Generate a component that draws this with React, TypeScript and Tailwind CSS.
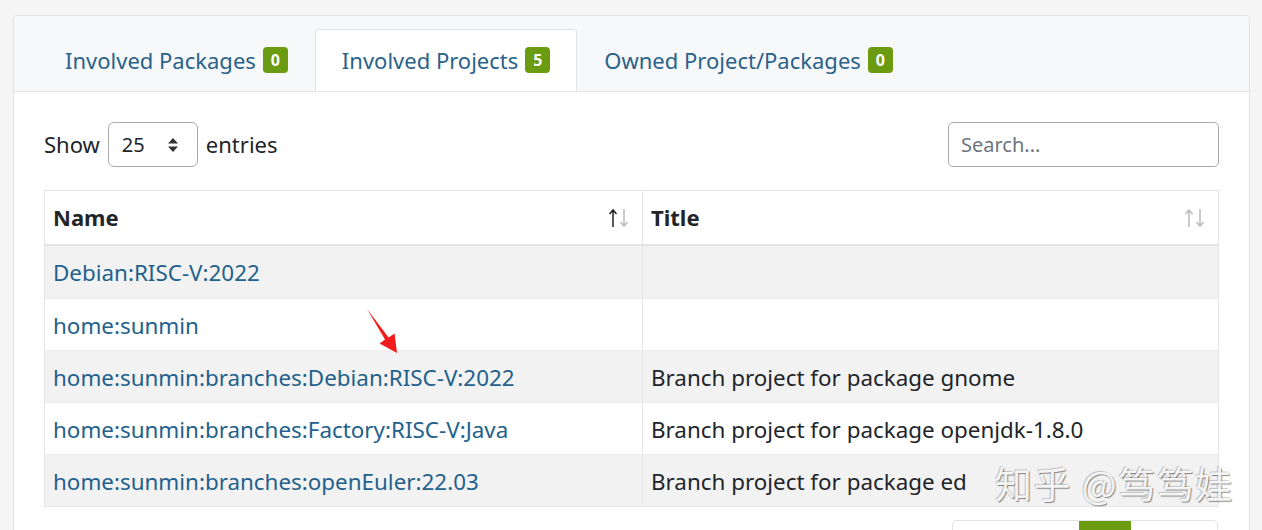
const tabs = [
  { label: "Involved Packages", count: 0, active: false },
  { label: "Involved Projects", count: 5, active: true },
  { label: "Owned Project/Packages", count: 0, active: false },
];

const rows = [
  { name: "Debian:RISC-V:2022", title: "" },
  { name: "home:sunmin", title: "" },
  { name: "home:sunmin:branches:Debian:RISC-V:2022", title: "Branch project for package gnome" },
  { name: "home:sunmin:branches:Factory:RISC-V:Java", title: "Branch project for package openjdk-1.8.0" },
  { name: "home:sunmin:branches:openEuler:22.03", title: "Branch project for package ed" },
];

function SortArrows({ active }: { active?: boolean }) {
  return (
    <span className="flex items-center gap-[1px]">
      <svg width="10" height="20" viewBox="0 0 10 20" className={active ? "text-[#222]" : "text-[#bbb]"}>
        <path d="M5 19V2M1.5 6L5 2l3.5 4" fill="none" stroke="currentColor" strokeWidth="1.5" />
      </svg>
      <svg width="10" height="20" viewBox="0 0 10 20" className="text-[#bbb]">
        <path d="M5 1v17M1.5 14L5 18l3.5-4" fill="none" stroke="currentColor" strokeWidth="1.5" />
      </svg>
    </span>
  );
}

export default function App() {
  return (
    <div className="relative min-h-screen bg-[#f5f5f5] pl-[13px] pr-[12px] pt-[15px] font-['Noto_Sans',sans-serif] text-[#212529]">
      <div className="rounded-[4px] border border-[#e2e2e2] bg-white pb-[40px]">
        {/* tabs */}
        <div className="flex rounded-t-[4px] border-b border-[#e3e3e3] bg-[#f7f8f9] px-[24px] pt-[13px]">
          {tabs.map((t) => (
            <div
              key={t.label}
              className={
                t.active
                  ? "-mb-px flex h-[62px] items-center gap-[7px] rounded-t-[4px] border border-[#e3e3e3] border-b-white bg-white px-[26px]"
                  : "flex h-[62px] items-center gap-[7px] border border-transparent px-[26px]"
              }
            >
              <span className="pt-[1px] text-[22px] text-[#2a628a]">{t.label}</span>
              <span className="flex h-[26px] min-w-[25px] items-center justify-center rounded-[4px] bg-[#6b9b10] px-[7px] text-[16px] font-bold text-white">
                {t.count}
              </span>
            </div>
          ))}
        </div>

        <div className="px-[30px] pt-[30px]">
          {/* controls */}
          <div className="flex h-[45px] items-center justify-between">
            <div className="flex items-center text-[22px]">
              <span>Show</span>
              <div className="ml-[8px] mr-[8px] flex h-[45px] w-[90px] items-center justify-between rounded-[6px] border border-[#aaa] pl-[13px] pr-[18px] text-[20px]">
                <span>25</span>
                <svg width="12" height="16" viewBox="0 0 12 16">
                  <path d="M6 1L11 6.5H1z M6 15L1 9.5h10z" fill="#333" />
                </svg>
              </div>
              <span>entries</span>
            </div>
            <input
              placeholder="Search..."
              className="h-[45px] w-[271px] rounded-[5px] border border-[#aaa] px-[12px] text-[20px] outline-none placeholder:text-[#6c757d]"
            />
          </div>

          {/* table */}
          <div className="mt-[23px] border border-[#e6e6e6]">
            <div className="grid grid-cols-[598px_1fr] border-b-2 border-[#e4e4e4] text-[22px] font-bold">
              <div className="flex h-[53px] items-center justify-between border-r border-[#e6e6e6] pl-[8px] pr-[13px]">
                <span>Name</span>
                <SortArrows active />
              </div>
              <div className="flex h-[53px] items-center justify-between pl-[8px] pr-[13px]">
                <span>Title</span>
                <SortArrows />
              </div>
            </div>
            {rows.map((r, i) => (
              <div
                key={r.name}
                className={
                  "grid h-[52px] grid-cols-[598px_1fr] text-[22.4px] " +
                  (i % 2 === 0 ? "bg-[#f2f2f2] " : "bg-white ") +
                  (i > 0 ? "border-t border-[#ececec]" : "")
                }
              >
                <div className="flex items-center border-r border-[#e6e6e6] pl-[8px] pt-[2px]">
                  <a href="#" className="text-[#22618c]">{r.name}</a>
                </div>
                <div className="flex items-center pl-[8px] pt-[2px]">{r.title}</div>
              </div>
            ))}
          </div>

          {/* pagination (labels fall below the visible frame) */}
          <div className="mt-[13px] flex justify-end pr-[1px]">
            <div className="flex h-[42px] overflow-hidden rounded-[5px] border border-[#e3e3e3]">
              <span className="w-[126px]" />
              <span className="w-[52px] bg-[#6b9b10]" />
              <span className="w-[86px]" />
            </div>
          </div>
        </div>
      </div>

      {/* annotation arrow */}
      <svg className="absolute left-[360px] top-[304px]" width="45" height="56" viewBox="0 0 45 56">
        <polygon points="7,5 28.6,33.6 34.6,29.6 37,49 19.6,39.4 25,35.6" fill="#f21c1c" />
      </svg>

      {/* watermark */}
      <div className="absolute left-[995px] top-[456px] font-['Noto_Sans_CJK_SC',sans-serif] text-[37px] tracking-[1.5px] text-white/90 [text-shadow:1px_1px_1px_rgba(0,0,0,0.45),-1px_-1px_1px_rgba(0,0,0,0.2)]">
        知乎 @笃笃娃
      </div>
    </div>
  );
}
